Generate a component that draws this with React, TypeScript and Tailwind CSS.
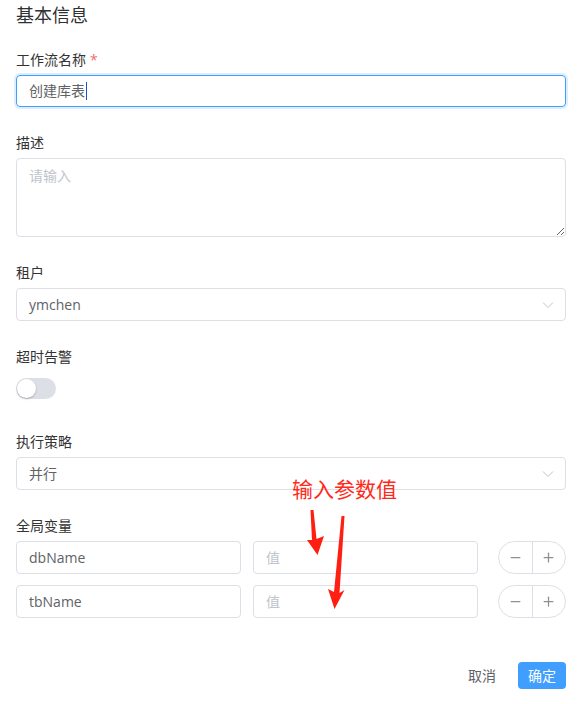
import { Minus, Plus } from "lucide-react";

const font = { fontFamily: '"Open Sans", "Noto Sans CJK SC", sans-serif' };

function Label({ text, required }: { text: string; required?: boolean }) {
  return (
    <div className="h-[22px] leading-[22px] text-sm text-[#333] mb-1 flex items-center">
      {text}
      {required && <span className="ml-1 text-[#f56c6c]">*</span>}
    </div>
  );
}

function Chevron() {
  return (
    <svg width="12" height="8" viewBox="0 0 12 8" className="text-[#c0c4cc]">
      <path d="M1 1.5 L6 6.5 L11 1.5" fill="none" stroke="currentColor" strokeWidth="1" />
    </svg>
  );
}

function Select({ value }: { value: string }) {
  return (
    <div className="h-[33px] border border-[#dcdfe6] rounded flex items-center justify-between px-3 text-sm text-[#606266]">
      <span>{value}</span>
      <span className="mr-[-1px]">
        <Chevron />
      </span>
    </div>
  );
}

function VarRow({ name }: { name: string }) {
  return (
    <div className="flex items-center">
      <div className="w-[225px] h-[33px] border border-[#dcdfe6] rounded flex items-center px-3 text-sm text-[#606266]">
        {name}
      </div>
      <div className="w-[225px] h-[33px] ml-3 border border-[#dcdfe6] rounded flex items-center px-3 text-sm text-[#c0c4cc]">
        值
      </div>
      <div className="ml-5 w-[68px] h-[33px] border border-[#dcdfe6] rounded-full flex">
        <div className="flex-1 flex items-center justify-center border-r border-[#dcdfe6]">
          <Minus size={15} color="#8c8f96" strokeWidth={2} />
        </div>
        <div className="flex-1 flex items-center justify-center">
          <Plus size={15} color="#8c8f96" strokeWidth={2} />
        </div>
      </div>
    </div>
  );
}

export default function App() {
  return (
    <div className="relative w-[587px] h-[704px] bg-white pl-4 pr-[21px] pt-px" style={font}>
      <div className="h-6 pt-[2px] leading-6 text-[18px] text-[#303133] mb-[24px]">基本信息</div>

      <div className="mb-[25px]">
        <Label text="工作流名称" required />
        <div className="h-8 border border-[#409eff] rounded shadow-[0_0_0_2px_rgba(64,158,255,0.18)] flex items-center px-3 text-sm text-[#606266]">
          <span>创建库表</span>
          <span className="w-px h-[18px] bg-[#1a4fd6] ml-px" />
        </div>
      </div>

      <div className="mb-[25px]">
        <Label text="描述" />
        <textarea
          placeholder="请输入"
          className="block w-full h-[79px] border border-[#dcdfe6] rounded px-3 py-[6px] text-sm leading-[22px] text-[#606266] placeholder:text-[#c0c4cc] outline-none"
          style={font}
        />
      </div>

      <div className="mb-[25px]">
        <Label text="租户" />
        <Select value="ymchen" />
      </div>

      <div className="mb-[27px]">
        <Label text="超时告警" />
        <div className="h-8 flex items-center">
          <div className="w-10 h-[21px] rounded-full bg-[#dcdfe6] relative">
            <div className="absolute left-px top-px w-[19px] h-[19px] rounded-full bg-white shadow-[0_1px_2px_rgba(0,0,0,0.25)]" />
          </div>
        </div>
      </div>

      <div className="mb-[25px]">
        <Label text="执行策略" />
        <Select value="并行" />
      </div>

      <div>
        <Label text="全局变量" />
        <div className="flex flex-col gap-[11px]">
          <VarRow name="dbName" />
          <VarRow name="tbName" />
        </div>
      </div>

      <div className="mt-[44px] flex justify-end items-center">
        <span className="text-sm text-[#606266] mr-[22px]">取消</span>
        <div className="h-[27px] px-[10px] rounded bg-[#409eff] text-white text-sm flex items-center">
          确定
        </div>
      </div>

      <div className="absolute left-[292px] top-[477px] text-[21px] leading-6 text-[#ff2a1a]">
        输入参数值
      </div>
      <svg className="absolute left-0 top-0 pointer-events-none" width="587" height="704">
        <polygon
          fill="#ff1f12"
          points="310.5,510 313.5,510 316.5,539 324,536 317.5,555 307,540 312,540"
        />
        <polygon
          fill="#ff1f12"
          points="341.5,516 344.5,516 339.5,593 344.5,590 334.5,609 328,589 334,592"
        />
      </svg>
    </div>
  );
}
